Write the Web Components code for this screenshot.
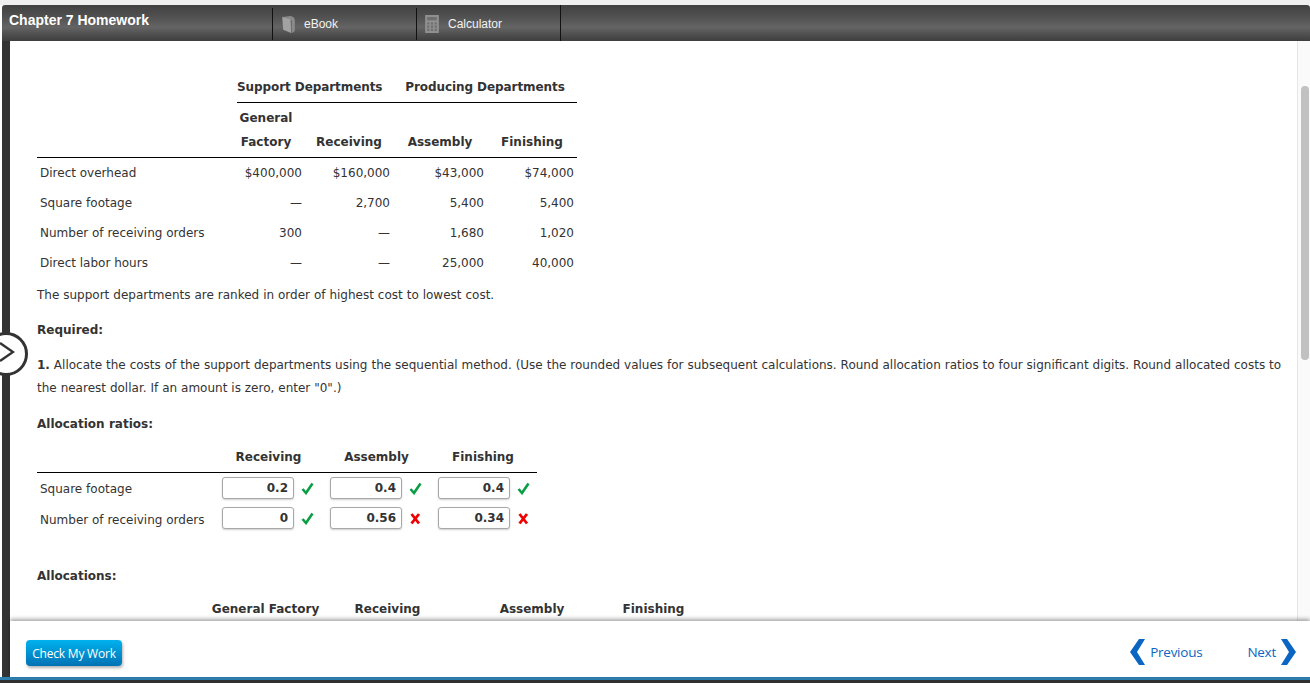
<!DOCTYPE html>
<html>
<head>
<meta charset="utf-8">
<title>Chapter 7 Homework</title>
<style>
    html, body {
        margin: 0;
        height: 100%;
        overflow: hidden;
        background: #fff;
    }
</style>
</head>
<body>
<hw-app>
    <hw-header slot="header" title="Chapter 7 Homework">
        <hw-tab icon="book">eBook</hw-tab>
        <hw-tab icon="calc">Calculator</hw-tab>
    </hw-header>
    <hw-question slot="content"></hw-question>
    <hw-footer slot="footer"></hw-footer>
</hw-app>

<script>
class HwApp extends HTMLElement {
    constructor() {
        super();
        this._shadowRoot = this.attachShadow({mode: "open"});
    }

    connectedCallback() {
        this._shadowRoot.innerHTML = `
            <style>
                :host {
                    display: flex;
                    flex-direction: column;
                    height: 683px;
                    background: #fff;
                    position: relative;
                    overflow: hidden;
                }
                .strip { height: 5px; background: #efefef; flex: none; }
                .head { flex: none; margin-left: 2px; }
                .middle { flex: 1; min-height: 0; display: flex; margin-left: 2px; }
                .bar { width: 8px; background: #333; flex: none; }
                .scroller { flex: 1; min-width: 0; overflow: hidden; }
                .track {
                    width: 12px;
                    flex: none;
                    background: #fafafa;
                    border-left: 1px solid #e6e6e6;
                    box-sizing: content-box;
                    padding-top: 45px;
                }
                .thumb {
                    width: 8px;
                    height: 274px;
                    margin-left: 3px;
                    background: #c1c1c1;
                    border-radius: 4px;
                }
                .foot { flex: none; margin-left: 2px; display: flex; }
                .foot ::slotted(*) { flex: 1; }
                .base { flex: none; height: 3px; background: #2d7fb0; }
                .end { flex: none; height: 3px; background: #303030; }
                .toggle {
                    position: absolute;
                    left: -16px;
                    top: 332px;
                    width: 38px;
                    height: 38px;
                    border: 3px solid #333;
                    border-radius: 50%;
                    background: #fff;
                }
                .toggle svg { position: absolute; left: 12px; top: 6px; }
            </style>
            <div class="strip"></div>
            <div class="head"><slot name="header"></slot></div>
            <div class="middle">
                <div class="bar"></div>
                <div class="scroller"><slot name="content"></slot></div>
                <div class="track"><div class="thumb"></div></div>
            </div>
            <div class="foot">
                <div class="bar"></div>
                <slot name="footer"></slot>
            </div>
            <div class="base"></div>
            <div class="end"></div>
            <div class="toggle">
                <svg width="16" height="22" viewBox="0 0 16 22">
                    <path d="M1 2 L14 11 L1 20" fill="none" stroke="#333" stroke-width="2.4"/>
                </svg>
            </div>
        `;
    }
}

class HwHeader extends HTMLElement {
    constructor() {
        super();
        this._shadowRoot = this.attachShadow({mode: "open"});
    }

    connectedCallback() {
        this._shadowRoot.innerHTML = `
            <style>
                :host {
                    display: flex;
                    height: 36px;
                    border-radius: 3px 3px 0 0;
                    background: linear-gradient(#414141 0%, #4f4f4f 30%, #646464 62%, #4c4c4c 85%, #3e3e3e 100%);
                    font-family: "Liberation Sans", Arial, sans-serif;
                    color: #fff;
                }
                h1 {
                    width: 263px;
                    margin: 0;
                    padding: 7px 0 0 7px;
                    box-sizing: content-box;
                    font-size: 14px;
                    line-height: 16px;
                    font-weight: bold;
                }
                .tabs { display: flex; padding-top: 3px; border-right: 1px solid #111; margin-right: auto; }
            </style>
            <h1>${this.getAttribute("title")}</h1>
            <div class="tabs"><slot></slot></div>
        `;
    }
}

class HwTab extends HTMLElement {
    constructor() {
        super();
        this._shadowRoot = this.attachShadow({mode: "open"});
    }

    connectedCallback() {
        const icons = {
            book: `<svg width="15" height="19" viewBox="0 0 14 18">
                <path d="M1 2 L9 1 Q13 2 13 5 L13 15 Q12 17 10 17 L10 6 Q10 4 8 4 Z" fill="#8a8a8a"/>
                <path d="M1 2 L9 4 L9.5 17 L2 14 Z" fill="#a2a2a2"/>
            </svg>`,
            calc: `<svg class="calc" width="14" height="18" viewBox="0 0 13 17">
                <rect width="13" height="17" fill="#8f8f8f"/>
                <rect x="2" y="2" width="9" height="3" fill="#6e6e6e"/>
                <path d="M2 7h2v2H2zM5.5 7h2v2h-2zM9 7h2v2H9zM2 10h2v2H2zM5.5 10h2v2h-2zM9 10h2v2H9zM2 13h2v2H2zM5.5 13h2v2h-2zM9 13h2v2H9z" fill="#6e6e6e"/>
            </svg>`
        };
        this._shadowRoot.innerHTML = `
            <style>
                :host {
                    display: flex;
                    align-items: center;
                    gap: 8px;
                    width: 144px;
                    height: 32px;
                    box-sizing: border-box;
                    border-left: 1px solid #111;
                    padding: 0 0 0 8px;
                    font-size: 12px;
                    color: #f2f2f2;
                }
                svg { flex: none; }
                .calc { margin-right: 1px; }
            </style>
            ${icons[this.getAttribute("icon")]}
            <span><slot></slot></span>
        `;
    }
}

class HwCostTable extends HTMLElement {
    constructor() {
        super();
        this._shadowRoot = this.attachShadow({mode: "open"});
    }

    connectedCallback() {
        const rows = [
            ["Direct overhead", "$400,000", "$160,000", "$43,000", "$74,000"],
            ["Square footage", "—", "2,700", "5,400", "5,400"],
            ["Number of receiving orders", "300", "—", "1,680", "1,020"],
            ["Direct labor hours", "—", "—", "25,000", "40,000"]
        ];
        this._shadowRoot.innerHTML = `
            <style>
                :host { display: block; width: 540px; }
                .grid {
                    display: grid;
                    grid-template-columns: 200px 68px 88px 94px 90px;
                }
                .top {
                    grid-column: 2 / 6;
                    display: grid;
                    grid-template-columns: 156px 184px;
                    height: 32px;
                    padding-top: 2px;
                    box-sizing: border-box;
                    align-items: center;
                    border-bottom: 1px solid #000;
                    font-weight: bold;
                    letter-spacing: -0.08px;
                }
                .top span:last-child { text-align: center; }
                .heads {
                    grid-column: 1 / 6;
                    display: grid;
                    grid-template-columns: subgrid;
                    align-items: end;
                    height: 55px;
                    padding-bottom: 3px;
                    box-sizing: border-box;
                    border-bottom: 1px solid #000;
                    font-weight: bold;
                    text-align: center;
                    line-height: 24px;
                }
                .heads .first { padding-right: 10px; }
                .row {
                    grid-column: 1 / 6;
                    display: grid;
                    grid-template-columns: subgrid;
                    height: 30px;
                    align-items: center;
                    text-align: right;
                }
                .row span { padding-right: 3px; }
                .row span:first-child { text-align: left; padding-left: 3px; }
            </style>
            <div class="grid">
                <div class="top"><span>Support Departments</span><span>Producing Departments</span></div>
                <div class="heads">
                    <span></span>
                    <span class="first">General<br>Factory</span>
                    <span>Receiving</span>
                    <span>Assembly</span>
                    <span>Finishing</span>
                </div>
                ${rows.map(r => `<div class="row">${r.map(c => `<span>${c}</span>`).join("")}</div>`).join("")}
            </div>
        `;
    }
}

class HwAnswer extends HTMLElement {
    constructor() {
        super();
        this._shadowRoot = this.attachShadow({mode: "open"});
    }

    connectedCallback() {
        const ok = this.getAttribute("status") === "ok";
        const mark = ok
            ? `<svg width="13" height="13" viewBox="0 0 13 13"><path d="M1.5 7 L5 11 L11.5 1.5" fill="none" stroke="#0a9e45" stroke-width="2.6"/></svg>`
            : `<svg width="13" height="13" viewBox="0 0 13 13"><path d="M2.5 2 L10 11.5 M10 2 L2.5 11.5" fill="none" stroke="#f00000" stroke-width="2.8"/></svg>`;
        this._shadowRoot.innerHTML = `
            <style>
                :host { display: flex; align-items: center; gap: 7px; }
                .box {
                    width: 72px;
                    height: 22px;
                    box-sizing: border-box;
                    border: 1px solid #a8a8a8;
                    border-radius: 3px;
                    box-shadow: 0 1px 2px rgba(0,0,0,.2);
                    background: #fff;
                    padding-right: 5px;
                    text-align: right;
                    font-weight: bold;
                    line-height: 20px;
                    font-size: 12px;
                }
            </style>
            <div class="box">${this.getAttribute("value")}</div>
            ${mark}
        `;
    }
}

class HwRatioTable extends HTMLElement {
    constructor() {
        super();
        this._shadowRoot = this.attachShadow({mode: "open"});
    }

    connectedCallback() {
        this._shadowRoot.innerHTML = `
            <style>
                :host { display: block; width: 500px; }
                .grid {
                    display: grid;
                    grid-template-columns: 185px 108px 108px 99px;
                }
                .head {
                    height: 29px;
                    padding-top: 2px;
                    display: flex;
                    align-items: center;
                    justify-content: center;
                    font-weight: bold;
                    border-bottom: 1px solid #000;
                }
                .head.r { padding-right: 15px; }
                .head.l { padding-right: 9px; }
                .label { height: 30px; display: flex; align-items: center; padding-left: 3px; box-sizing: border-box; padding-top: 2px; }
                .label.low { padding-top: 4px; }
                .cell { height: 30px; display: flex; align-items: center; }
            </style>
            <div class="grid">
                <div class="head"></div>
                <div class="head r">Receiving</div>
                <div class="head r">Assembly</div>
                <div class="head l">Finishing</div>
                <div class="label">Square footage</div>
                <div class="cell"><hw-answer value="0.2" status="ok"></hw-answer></div>
                <div class="cell"><hw-answer value="0.4" status="ok"></hw-answer></div>
                <div class="cell"><hw-answer value="0.4" status="ok"></hw-answer></div>
                <div class="label low">Number of receiving orders</div>
                <div class="cell"><hw-answer value="0" status="ok"></hw-answer></div>
                <div class="cell"><hw-answer value="0.56" status="bad"></hw-answer></div>
                <div class="cell"><hw-answer value="0.34" status="bad"></hw-answer></div>
            </div>
        `;
    }
}

class HwQuestion extends HTMLElement {
    constructor() {
        super();
        this._shadowRoot = this.attachShadow({mode: "open"});
    }

    connectedCallback() {
        this._shadowRoot.innerHTML = `
            <style>
                :host {
                    display: block;
                    padding: 30px 12px 0 27px;
                    font-family: "DejaVu Sans", Verdana, sans-serif;
                    font-size: 12px;
                    line-height: 23px;
                    color: #333;
                }
                p { margin: 0; word-spacing: 0.12px; }
                .gap6 { margin-top: 6px; }
                .gap12 { margin-top: 12px; }
                .gap13 { margin-top: 13px; }
                hw-ratio-table { margin-top: 5px; }
                .alloc { margin-top: 32px; }
                .cols {
                    display: grid;
                    grid-template-columns: 168px 121px 123px 166px 77px;
                    margin-top: 10px;
                    font-weight: bold;
                    text-align: center;
                }
            </style>
            <hw-cost-table></hw-cost-table>
            <p class="gap6">The support departments are ranked in order of highest cost to lowest cost.</p>
            <p class="gap12"><b>Required:</b></p>
            <p class="gap12"><b>1.</b> Allocate the costs of the support departments using the sequential method. (Use the rounded values for subsequent calculations. Round allocation ratios to four significant digits. Round allocated costs to the nearest dollar. If an amount is zero, enter "0".)</p>
            <p class="gap13"><b>Allocation ratios:</b></p>
            <hw-ratio-table></hw-ratio-table>
            <p class="alloc"><b>Allocations:</b></p>
            <div class="cols">
                <span></span>
                <span>General Factory</span>
                <span>Receiving</span>
                <span>Assembly</span>
                <span>Finishing</span>
            </div>
        `;
    }
}

class HwFooter extends HTMLElement {
    constructor() {
        super();
        this._shadowRoot = this.attachShadow({mode: "open"});
    }

    connectedCallback() {
        this._shadowRoot.innerHTML = `
            <style>
                :host {
                    display: flex;
                    align-items: center;
                    height: 56px;
                    box-sizing: border-box;
                    padding: 7px 14px 0 16px;
                    background: #fff;
                    box-shadow: 0 -2px 4px rgba(0,0,0,.35);
                    position: relative;
                    font-family: "Open Sans", sans-serif;
                }
                .check {
                    width: 96px;
                    height: 26px;
                    margin-top: 1px;
                    border-radius: 4px;
                    background: linear-gradient(#00b2ee, #0072b4);
                    box-shadow: 1px 2px 3px rgba(0,0,0,.3);
                    color: #fff;
                    font-size: 12px;
                    line-height: 28px;
                    text-align: center;
                    letter-spacing: -0.2px;
                }
                .nav {
                    display: flex;
                    align-items: center;
                    gap: 5px;
                    margin-bottom: 2px;
                    color: #0a66c2;
                    font-size: 13.5px;
                    letter-spacing: -0.25px;
                }
                .prev { margin-left: auto; }
                .next { margin-left: 45px; }
            </style>
            <div class="check">Check My Work</div>
            <div class="nav prev">
                <svg width="15" height="26" viewBox="0 0 15 26"><path d="M9 0 H15 L7 13 L15 26 H9 L0 13 Z" fill="#0a66c2"/></svg>
                <span>Previous</span>
            </div>
            <div class="nav next">
                <span>Next</span>
                <svg width="15" height="26" viewBox="0 0 15 26"><path d="M6 0 H0 L8 13 L0 26 H6 L15 13 Z" fill="#0a66c2"/></svg>
            </div>
        `;
    }
}

customElements.define("hw-app", HwApp);
customElements.define("hw-header", HwHeader);
customElements.define("hw-tab", HwTab);
customElements.define("hw-cost-table", HwCostTable);
customElements.define("hw-answer", HwAnswer);
customElements.define("hw-ratio-table", HwRatioTable);
customElements.define("hw-question", HwQuestion);
customElements.define("hw-footer", HwFooter);
</script>
</body>
</html>
